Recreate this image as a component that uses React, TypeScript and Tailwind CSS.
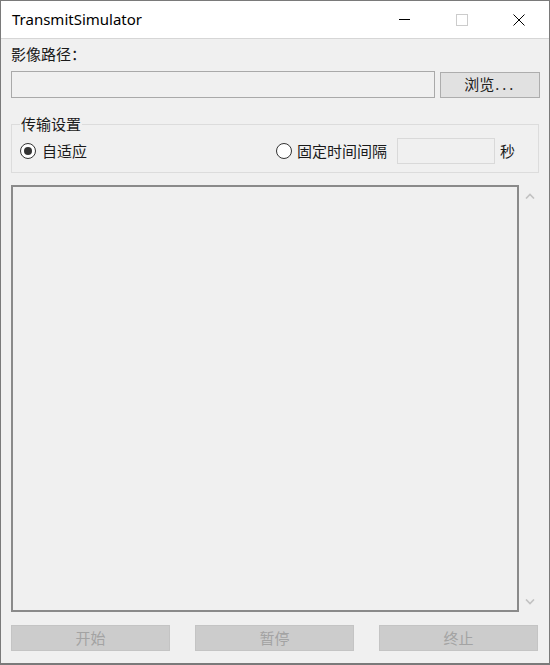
const cjk = "font-['Noto_Sans','Noto_Sans_CJK_SC',sans-serif]";

function Radio({ checked }: { checked?: boolean }) {
  return (
    <span className="w-[16px] h-[16px] rounded-full border border-[#333333] bg-white flex items-center justify-center shrink-0">
      {checked && <span className="w-[8px] h-[8px] rounded-full bg-[#333333]" />}
    </span>
  );
}

function Chevron({ up }: { up?: boolean }) {
  return (
    <svg width="10" height="6" viewBox="0 0 10 6" className="block">
      <path
        d={up ? "M1 5.5 L5 1.5 L9 5.5" : "M1 0.5 L5 4.5 L9 0.5"}
        fill="none"
        stroke="#c2c2c2"
        strokeWidth="1.6"
      />
    </svg>
  );
}

export default function App() {
  return (
    <div
      className={`w-[550px] h-[665px] border border-b-2 border-[#7a7a7a] bg-[#f0f0f0] flex flex-col text-[15px] text-[#1a1a1a] ${cjk}`}
    >
      {/* title bar */}
      <div className="h-[38px] bg-white border-b border-[#d6d6d6] flex items-center shrink-0">
        <div className="pl-[11px] flex-1 text-[15px] text-black">TransmitSimulator</div>
        <div className="w-[58px] h-full flex items-center justify-center">
          <span className="block w-[11px] h-[1px] bg-black" />
        </div>
        <div className="w-[58px] h-full flex items-center justify-center">
          <span className="block w-[12px] h-[12px] border border-[#cccccc]" />
        </div>
        <div className="w-[58px] h-full flex items-center justify-center pr-[2px]">
          <svg width="12" height="12" viewBox="0 0 12 12">
            <path d="M0.5 0.5 L11.5 11.5 M11.5 0.5 L0.5 11.5" stroke="#000" strokeWidth="1" />
          </svg>
        </div>
      </div>

      {/* body */}
      <div className="flex-1 flex flex-col pl-[10px] pr-[9px]">
        <div className="mt-[4px] h-[22px] leading-[22px]">影像路径：</div>

        <div className="mt-[6px] flex items-center gap-[5px]">
          <div className="w-[426px] h-[27px] border border-[#a9a9a9] bg-[#f0f0f0]" />
          <button className="w-[100px] h-[26px] border border-[#adadad] bg-[#e1e1e1] text-[15px] text-[#222222] leading-none flex items-center justify-center">
            浏览<span className="tracking-[3px] ml-[1px]">...</span>
          </button>
        </div>

        {/* group box */}
        <div className="relative mt-[26px] w-[528px] h-[49px] border border-[#dcdcdc]">
          <span className="absolute left-[8px] top-[-11px] px-[1px] bg-[#f0f0f0] leading-[20px]">
            传输设置
          </span>
          <div className="pt-[13px] pl-[8px] pr-[23px] flex items-center justify-between">
            <label className="flex items-center gap-[6px] h-[26px]">
              <Radio checked />
              <span>自适应</span>
            </label>
            <div className="flex items-center h-[26px]">
              <Radio />
              <span className="ml-[5px]">固定时间间隔</span>
              <span className="ml-[10px] w-[98px] h-[26px] border border-[#d9d9d9] bg-[#f0f0f0]" />
              <span className="ml-[5px]">秒</span>
            </div>
          </div>
        </div>

        {/* log area */}
        <div className="mt-[12px] flex">
          <div className="w-[508px] h-[427px] border-2 border-[#8a8a8a] bg-[#f0f0f0]" />
          <div className="w-[20px] ml-[1px] flex flex-col items-center justify-between pt-[8px] pb-[7px]">
            <Chevron up />
            <Chevron />
          </div>
        </div>

        {/* buttons */}
        <div className="mt-[13px] flex gap-[25px]">
          {["开始", "暂停", "终止"].map((t) => (
            <button
              key={t}
              className="w-[159px] h-[26px] border border-[#c4c4c4] bg-[#cccccc] text-[#a3a3a3] text-[15px] leading-none flex items-center justify-center"
            >
              {t}
            </button>
          ))}
        </div>
      </div>
    </div>
  );
}
